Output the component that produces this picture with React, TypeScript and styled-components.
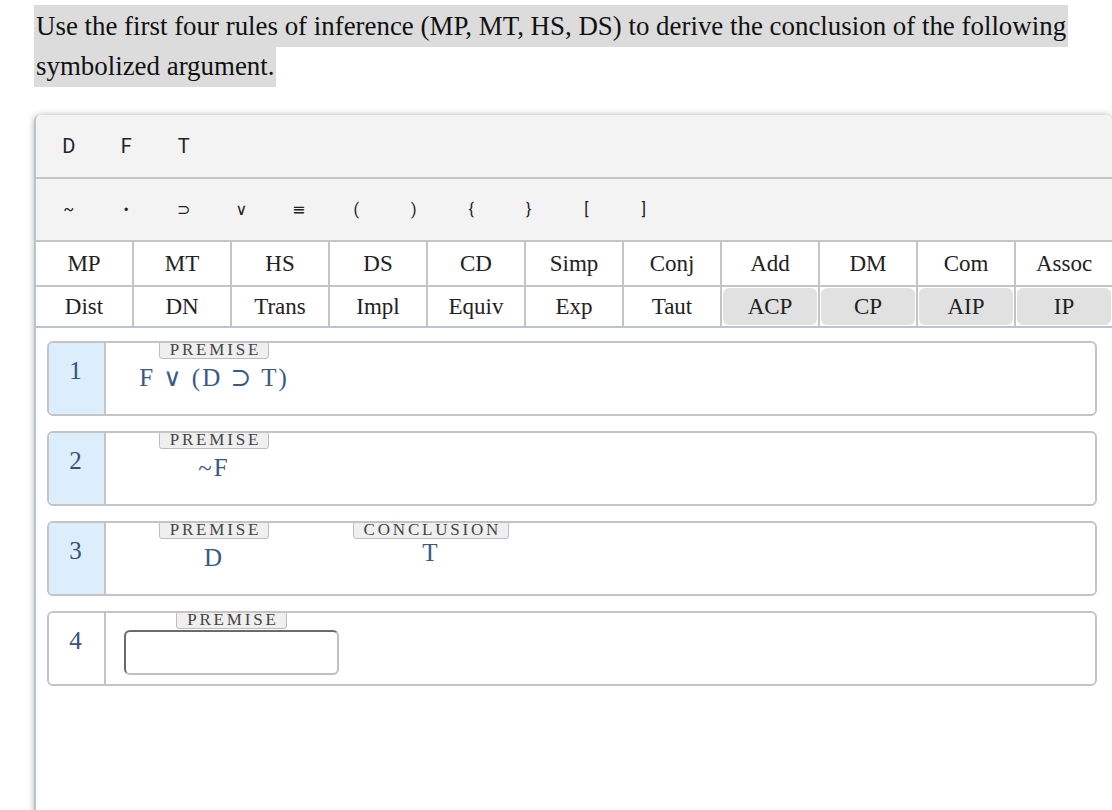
import React from 'react';
import styled, { createGlobalStyle } from 'styled-components';

const Global = createGlobalStyle`
  html, body { margin: 0; padding: 0; background: #fff; }
  body { overflow: hidden; }
  * { box-sizing: border-box; }
`;

const Page = styled.div`
  width: 1112px;
  height: 810px;
  overflow: hidden;
  padding: 6px 0 0 34px;
`;

const Prompt = styled.p`
  margin: 0;
  font-family: "Liberation Serif", "Times New Roman", serif;
  font-size: 26.9px;
  line-height: 40px;
  color: #111;
`;

const Highlight = styled.span`
  background: #dcdcdc;
  padding: 6px 2px;
  box-decoration-break: clone;
  -webkit-box-decoration-break: clone;
`;

const Panel = styled.div`
  margin-top: 29px;
  width: 1078px;
  height: 720px;
  border-left: 2px solid #bcc3ce;
  border-radius: 6px 6px 0 0;
  box-shadow: 0 0 6px rgba(0, 0, 0, 0.3);
  background: #fff;
  overflow: hidden;
`;

const KeyRow = styled.div<{ $h: number }>`
  display: flex;
  align-items: center;
  height: ${(p) => p.$h}px;
  padding-left: 4px;
  background: #f3f3f3;
`;

const Key = styled.button<{ $size: number }>`
  width: 57.5px;
  height: 100%;
  padding: 0;
  border: 0;
  background: transparent;
  font-family: Roboto, "DejaVu Sans", sans-serif;
  font-size: ${(p) => p.$size}px;
  font-weight: 400;
  color: #222;
  cursor: pointer;
`;

const Divider = styled.div`
  height: 2px;
  background: #c4c4c4;
`;

const RuleGrid = styled.div`
  display: grid;
  grid-template-columns: repeat(11, 1fr);
  grid-template-rows: 43px 39px;
  gap: 2px;
  background: #c4c4c4;
  border-top: 2px solid #c4c4c4;
  border-bottom: 2px solid #bac4d0;
`;

const RuleCell = styled.div`
  background: #fff;
  display: flex;
  padding: 1px;
`;

const RuleButton = styled.button<{ $disabled?: boolean }>`
  flex: 1;
  border: 0;
  border-radius: 6px;
  background: ${(p) => (p.$disabled ? '#e1e1e1' : '#fff')};
  font-family: "Liberation Serif", "Times New Roman", serif;
  font-size: 23px;
  color: #222;
  padding: 0;
  cursor: pointer;
`;

const Lines = styled.div`
  display: flex;
  flex-direction: column;
  gap: 15px;
  padding: 13px 15px 0 11px;
`;

const Card = styled.div`
  display: flex;
  height: 75px;
  border: 2px solid #c4c4c4;
  border-radius: 6px;
  overflow: hidden;
  background: #fff;
`;

const LineNo = styled.div<{ $active: boolean }>`
  flex: none;
  width: 57px;
  border-right: 2px solid #c4c4c4;
  background: ${(p) => (p.$active ? '#dcedfb' : '#fff')};
  font-family: "Liberation Serif", "Times New Roman", serif;
  font-size: 25px;
  line-height: 28px;
  color: #34527a;
  text-align: center;
  padding: 14px 2px 0 0;
`;

const Content = styled.div`
  display: flex;
  align-items: flex-start;
  gap: 37px;
  padding-left: 18px;
`;

const Column = styled.div<{ $w: number }>`
  width: ${(p) => p.$w}px;
  display: flex;
  flex-direction: column;
  align-items: center;
`;

const Badge = styled.div`
  margin-top: -2px;
  padding: 0 7px 0 9.8px;
  border: 1px solid #bdbdbd;
  border-radius: 3px;
  background: #efefef;
  font-family: "Liberation Serif", "Times New Roman", serif;
  font-size: 17px;
  line-height: 16px;
  letter-spacing: 2.8px;
  color: #444;
`;

const Formula = styled.div<{ $tight?: boolean }>`
  margin-top: ${(p) => (p.$tight ? 0 : 5)}px;
  font-family: "Liberation Serif", "DejaVu Serif", serif;
  font-size: 25px;
  line-height: 28px;
  letter-spacing: 2px;
  color: #3a5a84;
  white-space: pre;
`;

const LineInput = styled.input`
  margin-top: 1px;
  width: 215px;
  height: 45px;
  border: 2px solid;
  border-color: #6a6a6a #c0c0c0 #c0c0c0 #6a6a6a;
  border-radius: 6px;
  background: #fff;
  outline: none;
`;

const variables = ['D', 'F', 'T'];
const symbols = ['~', '•', '⊃', '∨', '≡', '(', ')', '{', '}', '[', ']'];
const rules1 = ['MP', 'MT', 'HS', 'DS', 'CD', 'Simp', 'Conj', 'Add', 'DM', 'Com', 'Assoc'];
const rules2 = ['Dist', 'DN', 'Trans', 'Impl', 'Equiv', 'Exp', 'Taut', 'ACP', 'CP', 'AIP', 'IP'];
const disabledRules = new Set(['ACP', 'CP', 'AIP', 'IP']);

type Line = { n: number; formula: string; conclusion?: string };
const lines: Line[] = [
  { n: 1, formula: 'F ∨ (D ⊃ T)' },
  { n: 2, formula: '~F' },
  { n: 3, formula: 'D', conclusion: 'T' },
];

export default function App() {
  return (
    <Page>
      <Global />
      <Prompt>
        <Highlight>
          Use the first four rules of inference (MP, MT, HS, DS) to derive the conclusion of the following
          symbolized argument.
        </Highlight>
      </Prompt>
      <Panel>
        <KeyRow $h={62}>
          {variables.map((v) => (
            <Key key={v} $size={20}>{v}</Key>
          ))}
        </KeyRow>
        <Divider />
        <KeyRow $h={61}>
          {symbols.map((s) => (
            <Key key={s} $size={16}>{s}</Key>
          ))}
        </KeyRow>
        <RuleGrid>
          {[...rules1, ...rules2].map((r) => (
            <RuleCell key={r}>
              <RuleButton $disabled={disabledRules.has(r)}>{r}</RuleButton>
            </RuleCell>
          ))}
        </RuleGrid>
        <Lines>
          {lines.map((l) => (
            <Card key={l.n}>
              <LineNo $active>{l.n}</LineNo>
              <Content>
                <Column $w={180}>
                  <Badge>PREMISE</Badge>
                  <Formula>{l.formula}</Formula>
                </Column>
                {l.conclusion && (
                  <Column $w={180}>
                    <Badge>CONCLUSION</Badge>
                    <Formula $tight>{l.conclusion}</Formula>
                  </Column>
                )}
              </Content>
            </Card>
          ))}
          <Card>
            <LineNo $active={false}>4</LineNo>
            <Content>
              <Column $w={215}>
                <Badge>PREMISE</Badge>
                <LineInput />
              </Column>
            </Content>
          </Card>
        </Lines>
      </Panel>
    </Page>
  );
}
